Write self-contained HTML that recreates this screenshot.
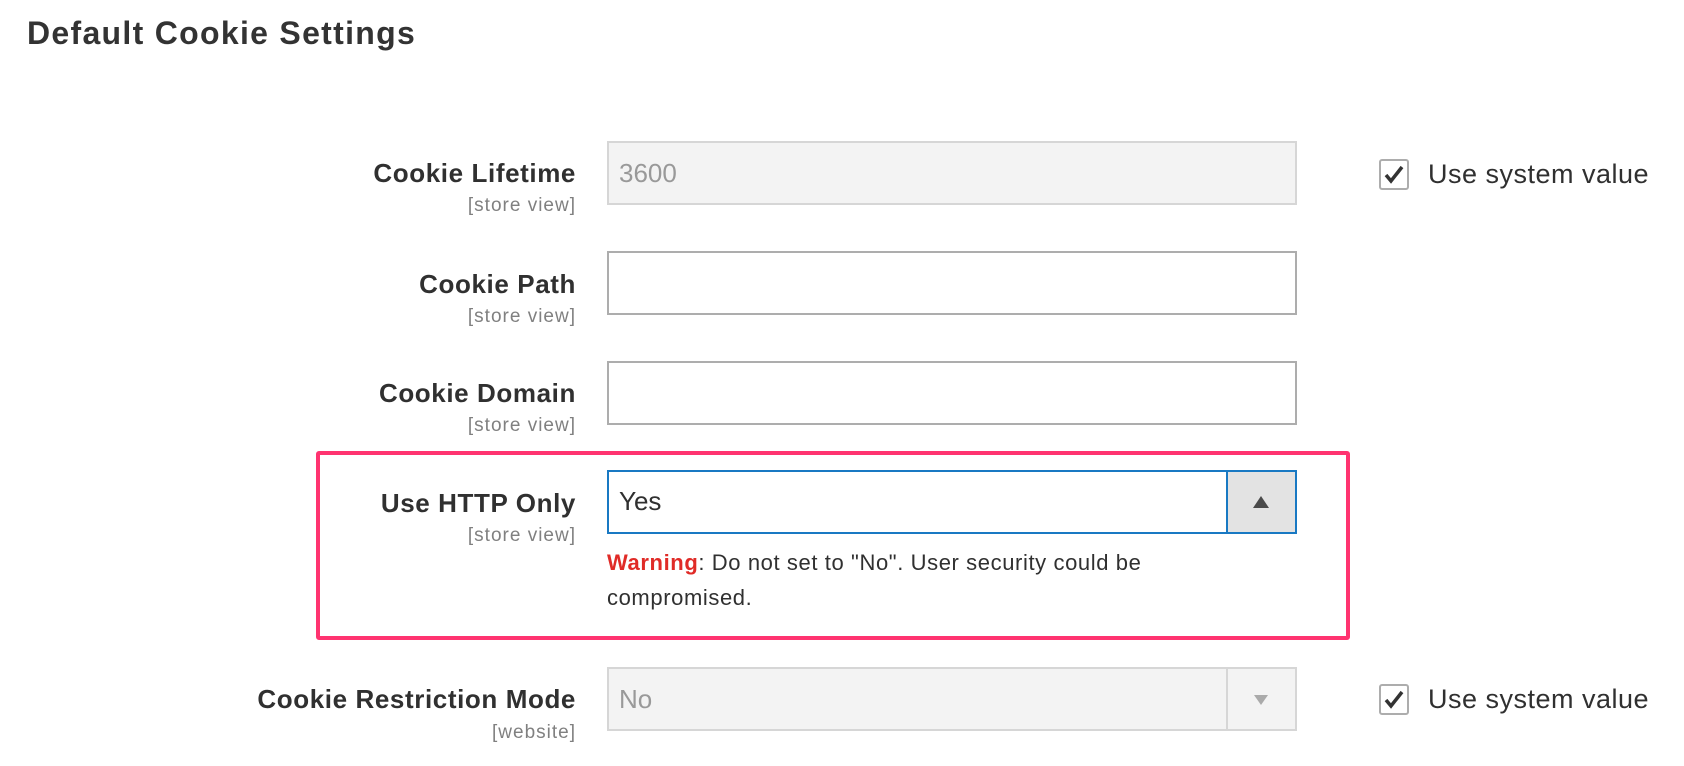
<!DOCTYPE html>
<html><head><meta charset="utf-8"><style>
body{margin:0;width:1684px;height:766px;background:#fff;font-family:"Liberation Sans",sans-serif;position:relative;overflow:hidden;color:#303030}
.a{position:absolute}
.t{left:27px;top:15px;font-size:32px;font-weight:bold;color:#333;letter-spacing:1.3px}
.lab{right:1108px;font-size:26px;font-weight:bold;color:#303030;white-space:nowrap;text-align:right;line-height:30px;letter-spacing:0.6px}
.sub{right:1108px;font-size:19px;color:#808080;white-space:nowrap;line-height:22px;letter-spacing:1px}
.in{left:607px;width:690px;box-sizing:border-box;border:2px solid #adadad;background:#fff;font-size:26px;line-height:60px;padding-left:10px}
.dis{background:#f3f3f3;border-color:#d6d6d6;color:#999}
.cb{left:1379px;width:30px;height:31px;box-sizing:border-box;border:2px solid #adadad;border-radius:3px;background:#fff}
.us{left:1428px;font-size:27px;color:#303030;line-height:30px;letter-spacing:0.5px}
</style></head><body>
<div class="a t">Default Cookie Settings</div>

<div class="a lab" style="top:158px">Cookie Lifetime</div>
<div class="a sub" style="top:195px">[store view]</div>
<div class="a in dis" style="top:141px;height:64px">3600</div>
<div class="a cb" style="top:159px"><svg width="26" height="27" viewBox="0 0 26 27"><path d="M5 14 L10 20 L21 6" fill="none" stroke="#333" stroke-width="3.5"/></svg></div>
<div class="a us" style="top:159px">Use system value</div>

<div class="a lab" style="top:269px">Cookie Path</div>
<div class="a sub" style="top:306px">[store view]</div>
<div class="a in" style="top:251px;height:64px"></div>

<div class="a lab" style="top:378px">Cookie Domain</div>
<div class="a sub" style="top:415px">[store view]</div>
<div class="a in" style="top:361px;height:64px"></div>

<div class="a" style="left:316px;top:451px;width:1034px;height:189px;box-sizing:border-box;border:4px solid #ff3370;border-radius:3px"></div>
<div class="a lab" style="top:488px">Use HTTP Only</div>
<div class="a sub" style="top:525px">[store view]</div>
<div class="a in" style="top:470px;height:64px;border-color:#1979c3;color:#303030;line-height:58px">Yes
<div class="a" style="right:0;top:0;width:67px;height:60px;background:#e3e3e3;border-left:2px solid #1979c3"><svg class="a" style="left:24px;top:23px" width="18" height="14"><path d="M9 1 L17 13 L1 13Z" fill="#4a4a4a"/></svg></div></div>
<div class="a" style="left:607px;top:545px;font-size:22px;line-height:35px;color:#303030;width:600px;letter-spacing:0.6px"><span style="color:#e02b27;font-weight:bold">Warning</span>: Do not set to "No". User security could be compromised.</div>

<div class="a lab" style="top:684px">Cookie Restriction Mode</div>
<div class="a sub" style="top:722px">[website]</div>
<div class="a in dis" style="top:667px;height:64px">No
<div class="a" style="right:0;top:0;width:67px;height:60px;border-left:2px solid #d6d6d6"><svg class="a" style="left:25px;top:25px" width="16" height="12"><path d="M1 1 L15 1 L8 11Z" fill="#aaa"/></svg></div></div>
<div class="a cb" style="top:684px"><svg width="26" height="27" viewBox="0 0 26 27"><path d="M5 14 L10 20 L21 6" fill="none" stroke="#333" stroke-width="3.5"/></svg></div>
<div class="a us" style="top:684px">Use system value</div>
</body></html>
